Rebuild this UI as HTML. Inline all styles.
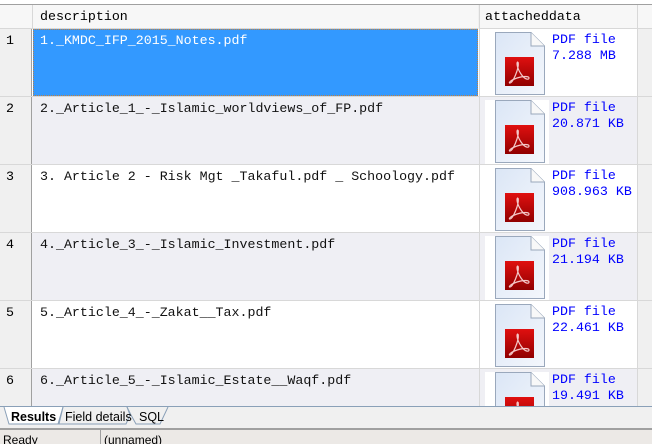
<!DOCTYPE html>
<html><head><style>
body{margin:0;width:652px;height:442px;overflow:hidden;background:#f0f0f0;position:relative;font-family:"Liberation Mono",monospace;}
.top{position:absolute;left:0;top:0;width:652px;height:4px;background:#fff;border-bottom:1px solid #a0a0a0;}
.hdr{position:absolute;top:5px;height:23px;background:#f7f7f7;border-bottom:1px solid #d8d8d8;font-size:13.3px;line-height:24px;color:#000;}
.row{position:absolute;left:0;width:652px;height:68px;border-bottom:1px solid #d8d8d8;box-sizing:border-box;}
.num{position:absolute;left:0;top:0;width:32px;height:100%;background:#f0f0f0;border-right:1px solid #a0a0a0;font-size:13.3px;padding:4px 0 0 6px;box-sizing:border-box;}
.desc{position:absolute;left:33px;top:0;width:445px;height:100%;font-size:13.3px;padding:4px 0 0 7px;box-sizing:border-box;white-space:pre;color:#111;}
.att{position:absolute;left:479px;top:0;width:158px;height:100%;border-left:1px solid #d8d8d8;}
.fill{position:absolute;left:637px;top:0;width:15px;height:100%;background:#f0f0f0;border-left:1px solid #d8d8d8;}
.ib{position:absolute;left:5px;top:3px;width:64px;height:64px;background:#fff;}
.txt{position:absolute;left:72px;top:3px;color:#0000ff;font-size:13.3px;line-height:16px;white-space:pre;}
.tabs{position:absolute;left:0;top:406px;width:652px;height:20px;background:#f0f0f0;border-top:1px solid #8aa0b8;font-family:"Liberation Sans",sans-serif;font-size:12px;}
.status{position:absolute;left:0;top:428px;width:652px;height:14px;background:#ece9e6;border-top:2px solid #a0a0a0;font-family:"Liberation Sans",sans-serif;font-size:12px;overflow:hidden;}
</style></head><body>
<div class="top"></div>
<div class="hdr" style="left:0;width:32px;border-right:1px solid #d8d8d8"></div>
<div class="hdr" style="left:33px;width:438px;padding-left:7px">description</div>
<div class="hdr" style="left:479px;width:153px;padding-left:5px;border-left:1px solid #d8d8d8">attacheddata</div>
<div class="hdr" style="left:637px;width:15px;border-left:1px solid #d8d8d8"></div>

<svg width="0" height="0" style="position:absolute"><defs>
<symbol id="pdf" viewBox="0 0 64 64">
<linearGradient id="pg" x1="0" y1="0" x2="1" y2="1"><stop offset="0" stop-color="#dbe6f6"/><stop offset="1" stop-color="#f4f7fc"/></linearGradient>
<linearGradient id="rg" x1="0" y1="0" x2="0" y2="1"><stop offset="0" stop-color="#e01010"/><stop offset="1" stop-color="#900000"/></linearGradient>
<path d="M10.5 0.5H46L59.5 14V62.5H10.5Z" fill="url(#pg)" stroke="#9aa8bc"/>
<path d="M46 0.5V14H59.5" fill="#f8f8f8" stroke="#9aa8bc"/>
<rect x="20" y="25" width="29" height="29" fill="url(#rg)"/>
<path d="M33 30c-2 0-1 6 3 12s8 6 8 4-6-2-12 0-9 5-7 5 5-6 7-12 1-9 1-9" fill="none" stroke="#f4c8c8" stroke-width="1.2"/>
</symbol></defs></svg>

<div class="row" style="top:29px;background:#fff"><div class="num">1</div><div class="desc" style="background:#3399ff;color:#fff;outline:1px dotted #c08040;outline-offset:-1px">1._KMDC_IFP_2015_Notes.pdf</div><div class="att"><div class="ib"><svg width="64" height="64"><use href="#pdf"/></svg></div><div class="txt">PDF file
7.288 MB</div></div><div class="fill"></div></div>
<div class="row" style="top:97px;background:#efeff4"><div class="num">2</div><div class="desc">2._Article_1_-_Islamic_worldviews_of_FP.pdf</div><div class="att"><div class="ib"><svg width="64" height="64"><use href="#pdf"/></svg></div><div class="txt">PDF file
20.871 KB</div></div><div class="fill"></div></div>
<div class="row" style="top:165px;background:#fff"><div class="num">3</div><div class="desc">3. Article 2 - Risk Mgt _Takaful.pdf _ Schoology.pdf</div><div class="att"><div class="ib"><svg width="64" height="64"><use href="#pdf"/></svg></div><div class="txt">PDF file
908.963 KB</div></div><div class="fill"></div></div>
<div class="row" style="top:233px;background:#efeff4"><div class="num">4</div><div class="desc">4._Article_3_-_Islamic_Investment.pdf</div><div class="att"><div class="ib"><svg width="64" height="64"><use href="#pdf"/></svg></div><div class="txt">PDF file
21.194 KB</div></div><div class="fill"></div></div>
<div class="row" style="top:301px;background:#fff"><div class="num">5</div><div class="desc">5._Article_4_-_Zakat__Tax.pdf</div><div class="att"><div class="ib"><svg width="64" height="64"><use href="#pdf"/></svg></div><div class="txt">PDF file
22.461 KB</div></div><div class="fill"></div></div>
<div class="row" style="top:369px;height:37px;background:#efeff4;border:none;overflow:hidden"><div class="num">6</div><div class="desc">6._Article_5_-_Islamic_Estate__Waqf.pdf</div><div class="att"><div class="ib"><svg width="64" height="64"><use href="#pdf"/></svg></div><div class="txt">PDF file
19.491 KB</div></div><div class="fill"></div></div>

<div class="tabs">
<svg width="170" height="20" style="position:absolute;left:0;top:0">
<path d="M4 0L9 17H58L63 0" fill="#fff" stroke="#8aa0b8"/>
<path d="M63 0L59 17H126L130 8L127 0" fill="none" stroke="#8aa0b8"/>
<path d="M127 0L131 8L136 17H160L168 0" fill="none" stroke="#8aa0b8"/>
<text x="11" y="14" font-family="Liberation Sans" font-size="12.5" font-weight="bold">Results</text>
<text x="65" y="14" font-family="Liberation Sans" font-size="12.5">Field details</text>
<text x="139" y="14" font-family="Liberation Sans" font-size="12.5">SQL</text>
</svg>
</div>
<div class="status"><span style="position:absolute;left:3px;top:3px">Ready</span><span style="position:absolute;left:100px;top:0;height:14px;border-left:1px solid #a0a0a0"></span><span style="position:absolute;left:104px;top:3px">(unnamed)</span></div>
</body></html>
